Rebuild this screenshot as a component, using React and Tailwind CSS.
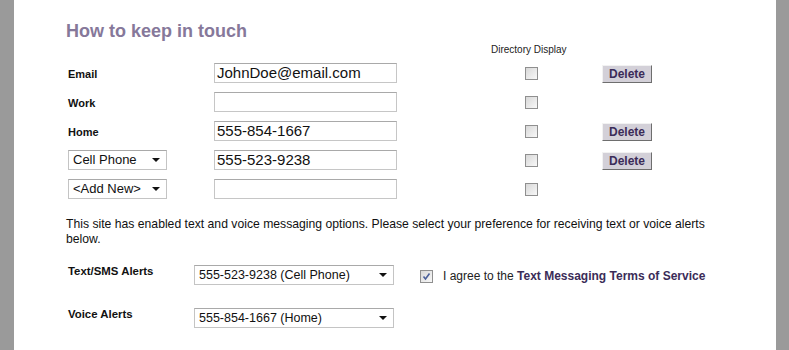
const rows = [
  { label: "Email", value: "JohnDoe@email.com", del: true },
  { label: "Work", value: "", del: false },
  { label: "Home", value: "555-854-1667", del: true },
  { select: "Cell Phone", value: "555-523-9238", del: true },
  { select: "<Add New>", value: "", del: false },
];

function Box({ checked }) {
  return (
    <span className="flex h-[13px] w-[13px] items-center justify-center border border-[#8f8f8f] bg-gradient-to-br from-[#d8d8d8] to-[#f8f8f8]">
      {checked && (
        <svg width="9" height="9" viewBox="0 0 9 9">
          <path d="M1.5 4.5 L3.5 7 L7.5 1.5" fill="none" stroke="#4a5f9a" strokeWidth="1.6" />
        </svg>
      )}
    </span>
  );
}

function Select({ text, w, size }) {
  return (
    <div
      className={`flex h-[20px] ${w} ${size} items-center justify-between border border-[#c4c4c4] border-t-[#a9a9a9] bg-white pl-[4px] pr-[6px] text-[#111]`}
    >
      <span>{text}</span>
      <svg width="8" height="4" viewBox="0 0 8 4">
        <path d="M0 0 H8 L4 4 Z" fill="#111" />
      </svg>
    </div>
  );
}

function DeleteBtn() {
  return (
    <button className="h-[18px] w-[50px] border border-[#f2f2f2] border-b-[#6e6e6e] border-r-[#6e6e6e] bg-[#d3d0d8] text-[12px] font-bold leading-none text-[#3b2c58]">
      Delete
    </button>
  );
}

export default function App() {
  return (
    <div
      className="flex h-[350px] w-[789px] bg-[#9a9a9a]"
      style={{ fontFamily: '"Liberation Sans", Arial, sans-serif' }}
    >
      <div className="ml-[14px] h-full w-[762px] bg-white pl-[52px] pt-[20px]">
        <h1 className="text-[18px] font-bold leading-[22px] text-[#86789a]">How to keep in touch</h1>
        <div className="mt-[2px] flex">
          <span className="ml-[425px] text-[10px] leading-[12px] text-[#222]">Directory Display</span>
        </div>
        <div className="mt-[7px] flex flex-col gap-[9px]">
          {rows.map((r, i) => (
            <div key={i} className="flex h-[20px] items-center">
              <div className="w-[148px] pl-[2px]">
                {r.select ? (
                  <Select text={r.select} w="w-[99px]" size="text-[13px]" />
                ) : (
                  <span className="text-[11px] font-bold text-[#111]">{r.label}</span>
                )}
              </div>
              <div className="flex h-[20px] w-[183px] items-center border border-[#c6c6c6] border-t-[#a9a9a9] bg-white px-[2px] text-[15px] text-[#111]">
                {r.value}
              </div>
              <div className="ml-[128px] flex w-[13px] items-center">
                <Box />
              </div>
              <div className="ml-[64px]">{r.del && <DeleteBtn />}</div>
            </div>
          ))}
        </div>
        <p className="mt-[18px] w-[670px] text-[12.2px] leading-[15px] text-[#111]">
          This site has enabled text and voice messaging options. Please select your preference for receiving text or voice alerts
          below.
        </p>
        <div className="mt-[18px] flex items-start">
          <div className="w-[128px] pl-[2px] text-[11.4px] font-bold leading-[12px] text-[#111]">Text/SMS Alerts</div>
          <Select text="555-523-9238 (Cell Phone)" w="w-[200px]" size="text-[12.5px]" />
          <div className="ml-[26px] mt-[5px] flex items-center leading-[13px]">
            <Box checked />
            <span className="ml-[10px] text-[12px] text-[#222]">
              I agree to the <span className="font-bold text-[#3b2c58]">Text Messaging Terms of Service</span>
            </span>
          </div>
        </div>
        <div className="mt-[23px] flex items-start">
          <div className="w-[128px] pl-[2px] text-[11.4px] font-bold leading-[12px] text-[#111]">Voice Alerts</div>
          <Select text="555-854-1667 (Home)" w="w-[200px]" size="text-[12.5px]" />
        </div>
      </div>
    </div>
  );
}
